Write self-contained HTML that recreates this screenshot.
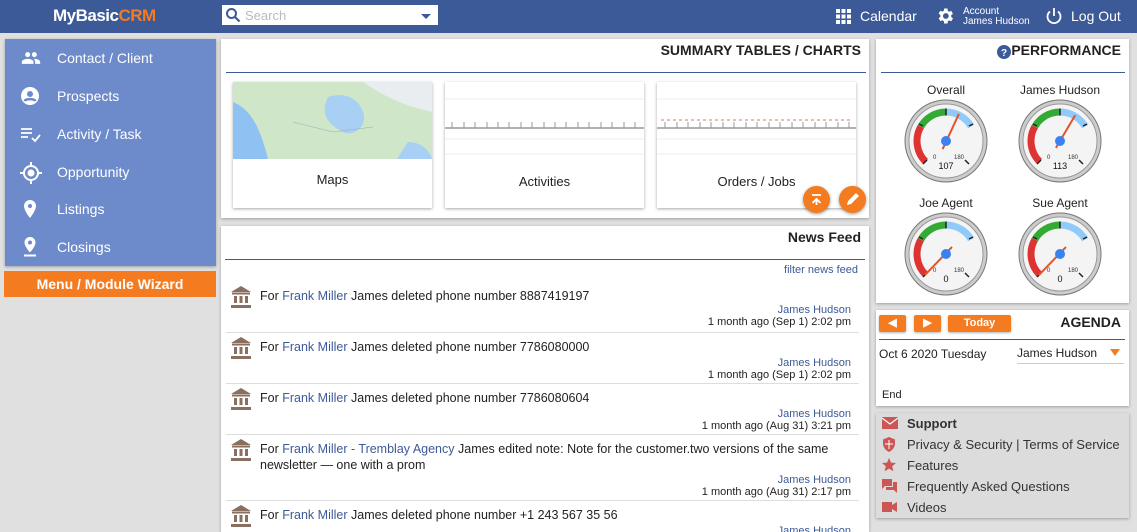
<!DOCTYPE html>
<html><head><meta charset="utf-8"><style>
*{box-sizing:border-box;margin:0;padding:0}
html,body{width:1137px;height:532px;overflow:hidden}
body{background:#e0e0e0;font-family:"Liberation Sans",Arial,sans-serif;position:relative;color:#222}
.abs{position:absolute}
.hdr{left:0;top:0;width:1137px;height:33px;background:#3d5a98}
.card{background:#fff;box-shadow:0 1px 3px rgba(0,0,0,.3)}
.side{left:5px;top:39px;width:211px;height:227px;background:#6d8bcb;box-shadow:0 1px 3px rgba(0,0,0,.3)}
.side .it{position:absolute;left:0;height:38px;width:211px;color:#fff;font-size:14px;line-height:38px}
.side .it span{position:absolute;left:52px}
.side .it svg{position:absolute;left:15px;top:9px}
.wiz{left:4px;top:271px;width:212px;height:26px;background:#f47b20;color:#fff;font-size:14px;font-weight:bold;text-align:center;line-height:26px}
.ttl{font-weight:bold;font-size:14px;position:absolute;right:8px}
.hr{position:absolute;height:1px;background:#3d5a98}
.tile{position:absolute;top:83px;width:199px;height:126px;background:#fff;box-shadow:0 1px 3px rgba(0,0,0,.35);font-size:13px;text-align:center}
.news{position:absolute;left:5px;width:633px;border-top:1px solid #ddd;font-size:12.5px}
.news .t{position:absolute;left:34px;top:6px;width:590px;line-height:16px}
.news .r{position:absolute;right:8px;text-align:right;font-size:11px;line-height:12px}
a{color:#3d5a98;text-decoration:none}
.blue{color:#3d5a98}
.bank{position:absolute;left:4px;top:3px}
.gl{position:absolute;font-size:12px;text-align:center;width:110px}
.btn{position:absolute;top:315px;height:17px;background:#f47b20;color:#fff;font-size:11px;font-weight:bold;text-align:center;line-height:17px;border-radius:2px;box-shadow:0 1px 2px rgba(0,0,0,.3)}
.sup{left:876px;top:413px;width:253px;height:105px;background:#dcdcdc;box-shadow:0 1px 3px rgba(0,0,0,.3);font-size:13px;color:#333}
.sup div{position:absolute;left:31px}
.sup svg{position:absolute;left:6px}
</style></head><body>
<div class="abs hdr"></div>
<div class="abs" style="left:53px;top:6px;font-size:17px;font-weight:bold;color:#fff;letter-spacing:-0.5px">MyBasic<span style="color:#f47b20">CRM</span></div>
<div class="abs" style="left:222px;top:5px;width:216px;height:20px;background:#fff"></div>
<svg class="abs" style="left:225px;top:7px" width="16" height="16" viewBox="0 0 16 16"><circle cx="6.5" cy="6.5" r="4.5" fill="none" stroke="#3d5a98" stroke-width="2"/><path d="M10 10l4.5 4.5" stroke="#3d5a98" stroke-width="2.2"/></svg>
<div class="abs" style="left:245px;top:8px;font-size:13px;color:#bbb">Search</div>
<div class="abs" style="left:421px;top:14px;width:0;height:0;border-left:5px solid transparent;border-right:5px solid transparent;border-top:5px solid #3d5a98"></div>
<svg class="abs" style="left:836px;top:9px" width="15" height="15"><g fill="#fff"><rect x="0" y="0" width="4" height="4"/><rect x="5.5" y="0" width="4" height="4"/><rect x="11" y="0" width="4" height="4"/><rect x="0" y="5.5" width="4" height="4"/><rect x="5.5" y="5.5" width="4" height="4"/><rect x="11" y="5.5" width="4" height="4"/><rect x="0" y="11" width="4" height="4"/><rect x="5.5" y="11" width="4" height="4"/><rect x="11" y="11" width="4" height="4"/></g></svg>
<div class="abs" style="left:860px;top:8px;color:#fff;font-size:14px">Calendar</div>
<svg class="abs" style="left:935px;top:6px" width="20" height="20" viewBox="0 0 24 24"><path fill="#fff" d="M19.4 13a7.5 7.5 0 000-2l2.1-1.6-2-3.5-2.5 1a7 7 0 00-1.7-1L15 3h-4l-.4 2.7a7 7 0 00-1.7 1l-2.5-1-2 3.5L6.5 11a7.5 7.5 0 000 2l-2.1 1.6 2 3.5 2.5-1a7 7 0 001.7 1L11 21h4l.4-2.7a7 7 0 001.7-1l2.5 1 2-3.5zM13 15.5A3.5 3.5 0 1113 8.5a3.5 3.5 0 010 7z"/></svg>
<div class="abs" style="left:963px;top:7px;color:#fff;font-size:10px;line-height:10px">Account<br>James Hudson</div>
<svg class="abs" style="left:1045px;top:7px" width="18" height="18" viewBox="0 0 18 18"><path d="M5 4.5a6.5 6.5 0 108 0" fill="none" stroke="#fff" stroke-width="1.8"/><path d="M9 1v8" stroke="#fff" stroke-width="1.8"/></svg>
<div class="abs" style="left:1071px;top:8px;color:#fff;font-size:14px">Log Out</div>

<div class="abs side">
<div class="it" style="top:0"><svg width="22" height="20" viewBox="0 0 24 24"><path fill="#fff" d="M16 11a3 3 0 100-6 3 3 0 000 6zm-8 0a3 3 0 100-6 3 3 0 000 6zm0 2c-2.3 0-7 1.2-7 3.5V19h14v-2.5C15 14.2 10.3 13 8 13zm8 0c-.3 0-.6 0-1 .1 1.2.8 2 2 2 3.4V19h6v-2.5c0-2.3-4.7-3.5-7-3.5z"/></svg><span>Contact / Client</span></div>
<div class="it" style="top:38px"><svg width="20" height="20" viewBox="0 0 20 20"><circle cx="10" cy="10" r="9" fill="#fff"/><circle cx="10" cy="8" r="3" fill="#6d8bcb"/><path d="M4.5 15c1.5-2.5 9.5-2.5 11 0" stroke="#6d8bcb" stroke-width="2.5" fill="none"/></svg><span>Prospects</span></div>
<div class="it" style="top:76px"><svg width="22" height="20" viewBox="0 0 22 20"><path d="M1 5h11M1 9h11M1 13h7M12 14l3 3 5-6" stroke="#fff" stroke-width="1.8" fill="none"/></svg><span>Activity / Task</span></div>
<div class="it" style="top:114px"><svg width="22" height="22" viewBox="0 0 22 22"><circle cx="11" cy="11" r="7" fill="none" stroke="#fff" stroke-width="2"/><circle cx="11" cy="11" r="3.5" fill="#fff"/><path d="M11 0v4M11 18v4M0 11h4M18 11h4" stroke="#fff" stroke-width="2"/></svg><span>Opportunity</span></div>
<div class="it" style="top:151px"><svg width="20" height="20" viewBox="0 0 20 20"><path fill="#fff" d="M10 1a6 6 0 00-6 6c0 4.5 6 12 6 12s6-7.5 6-12a6 6 0 00-6-6zm0 8a2 2 0 110-4 2 2 0 010 4z"/></svg><span>Listings</span></div>
<div class="it" style="top:189px"><svg width="20" height="20" viewBox="0 0 20 20"><path fill="#fff" d="M10 0a5.5 5.5 0 00-5.5 5.5c0 4 5.5 10 5.5 10s5.5-6 5.5-10A5.5 5.5 0 0010 0zm0 7.5a2 2 0 110-4 2 2 0 010 4z"/><rect x="4" y="17.5" width="12" height="2" fill="#fff"/></svg><span>Closings</span></div>
</div>
<div class="abs wiz">Menu / Module Wizard</div>

<!-- summary -->
<div class="abs card" style="left:221px;top:39px;width:648px;height:179px">
<div class="ttl" style="top:3px">SUMMARY TABLES / CHARTS</div>
<div class="hr" style="left:5px;top:33px;width:640px"></div>
<div class="tile" style="left:12px;top:43px">
<svg width="199" height="77" style="display:block"><rect width="199" height="77" fill="#cfe6c9"/><path d="M0 20C20 28 28 50 35 77H0z" fill="#8fc1f2"/><path d="M95 15c15-5 30 0 35 15s-10 25-20 20-25-15-15-35z" fill="#a8cff4"/><path d="M130 0h69v30c-20-5-40-10-69-30z" fill="#e8eef0"/><path d="M175 60c10 0 20 5 24 17h-35z" fill="#a8cff4"/><path d="M60 40l40 10 40-5" stroke="#9ab" stroke-width=".5" fill="none"/></svg>
<div style="margin-top:13px">Maps</div></div>
<div class="tile" style="left:224px;top:43px">
<svg width="199" height="77" style="display:block"><path d="M0 17h199M0 57h199M0 72h199" stroke="#eee"/><path d="M0 46h199" stroke="#666"/><g stroke="#999">
<path d="M7 40v6M19 40v6M30 40v6M42 40v6M53 40v6M64 40v6M76 40v6M87 40v6M99 40v6M110 40v6M121 40v6M133 40v6M144 40v6M156 40v6M167 40v6M179 40v6M190 40v6"/></g></svg>
<div style="margin-top:15px">Activities</div></div>
<div class="tile" style="left:436px;top:43px">
<svg width="199" height="77" style="display:block"><path d="M0 17h199M0 57h199M0 72h199" stroke="#eee"/><path d="M0 46h199" stroke="#666"/><g stroke="#e07060" stroke-dasharray="3 3">
<path d="M4 38h191"/></g><g stroke="#999"><path d="M8 40v6M20 40v6M31 40v6M43 40v6M54 40v6M66 40v6M77 40v6M89 40v6M100 40v6M112 40v6M123 40v6M135 40v6M146 40v6M158 40v6M169 40v6M181 40v6M192 40v6"/></g></svg>
<div style="margin-top:15px">Orders / Jobs</div></div>
<div class="abs" style="left:582px;top:147px;width:27px;height:27px;border-radius:50%;background:#f47b20;box-shadow:0 1px 3px rgba(0,0,0,.4)"><svg width="27" height="27"><path d="M9 9h9M9.5 17l4-4 4 4M13.5 13v6" stroke="#fff" stroke-width="1.8" fill="none"/></svg></div>
<div class="abs" style="left:618px;top:147px;width:27px;height:27px;border-radius:50%;background:#f47b20;box-shadow:0 1px 3px rgba(0,0,0,.4)"><svg width="27" height="27"><path d="M8 19l1-4 8-8 3 3-8 8z" fill="#fff"/></svg></div>
</div>

<!-- news -->
<div class="abs card" style="left:221px;top:226px;width:648px;height:306px;overflow:hidden">
<div class="ttl" style="top:3px">News Feed</div>
<div class="hr" style="left:4px;top:33px;width:640px"></div>
<div class="abs blue" style="right:11px;top:38px;font-size:11px">filter news feed</div>
<div class="news" style="top:56px;height:50px;border-top:none"><svg class="bank" width="22" height="24" viewBox="0 0 22 24"><path d="M11 1L1 7h20z M2 7.5h18v2H2z" fill="#8a6e5f"/><rect x="4" y="11" width="3" height="7" fill="#8a6e5f"/><rect x="9.5" y="11" width="3" height="7" fill="#8a6e5f"/><rect x="15" y="11" width="3" height="7" fill="#8a6e5f"/><rect x="1" y="20" width="20" height="3" fill="#8a6e5f"/></svg><div class="t">For <a>Frank Miller</a> James deleted phone number 8887419197</div><div class="r" style="top:22px"><span class="blue">James Hudson</span><br>1 month ago (Sep 1) 2:02 pm</div></div>
<div class="news" style="top:106px;height:51px"><svg class="bank" width="22" height="24" viewBox="0 0 22 24"><path d="M11 1L1 7h20z M2 7.5h18v2H2z" fill="#8a6e5f"/><rect x="4" y="11" width="3" height="7" fill="#8a6e5f"/><rect x="9.5" y="11" width="3" height="7" fill="#8a6e5f"/><rect x="15" y="11" width="3" height="7" fill="#8a6e5f"/><rect x="1" y="20" width="20" height="3" fill="#8a6e5f"/></svg><div class="t">For <a>Frank Miller</a> James deleted phone number 7786080000</div><div class="r" style="top:24px"><span class="blue">James Hudson</span><br>1 month ago (Sep 1) 2:02 pm</div></div>
<div class="news" style="top:157px;height:51px"><svg class="bank" width="22" height="24" viewBox="0 0 22 24"><path d="M11 1L1 7h20z M2 7.5h18v2H2z" fill="#8a6e5f"/><rect x="4" y="11" width="3" height="7" fill="#8a6e5f"/><rect x="9.5" y="11" width="3" height="7" fill="#8a6e5f"/><rect x="15" y="11" width="3" height="7" fill="#8a6e5f"/><rect x="1" y="20" width="20" height="3" fill="#8a6e5f"/></svg><div class="t">For <a>Frank Miller</a> James deleted phone number 7786080604</div><div class="r" style="top:24px"><span class="blue">James Hudson</span><br>1 month ago (Aug 31) 3:21 pm</div></div>
<div class="news" style="top:208px;height:66px"><svg class="bank" width="22" height="24" viewBox="0 0 22 24"><path d="M11 1L1 7h20z M2 7.5h18v2H2z" fill="#8a6e5f"/><rect x="4" y="11" width="3" height="7" fill="#8a6e5f"/><rect x="9.5" y="11" width="3" height="7" fill="#8a6e5f"/><rect x="15" y="11" width="3" height="7" fill="#8a6e5f"/><rect x="1" y="20" width="20" height="3" fill="#8a6e5f"/></svg><div class="t">For <a>Frank Miller - Tremblay Agency</a> James edited note: Note for the customer.two versions of the same newsletter — one with a prom</div><div class="r" style="top:39px"><span class="blue">James Hudson</span><br>1 month ago (Aug 31) 2:17 pm</div></div>
<div class="news" style="top:274px;height:50px"><svg class="bank" width="22" height="24" viewBox="0 0 22 24"><path d="M11 1L1 7h20z M2 7.5h18v2H2z" fill="#8a6e5f"/><rect x="4" y="11" width="3" height="7" fill="#8a6e5f"/><rect x="9.5" y="11" width="3" height="7" fill="#8a6e5f"/><rect x="15" y="11" width="3" height="7" fill="#8a6e5f"/><rect x="1" y="20" width="20" height="3" fill="#8a6e5f"/></svg><div class="t">For <a>Frank Miller</a> James deleted phone number +1 243 567 35 56</div><div class="r" style="top:24px"><span class="blue">James Hudson</span></div></div>
</div>

<!-- performance -->
<div class="abs card" style="left:876px;top:39px;width:253px;height:264px">
<svg class="abs" style="left:121px;top:6px" width="14" height="14"><circle cx="7" cy="7" r="7" fill="#3d5a98"/><text x="7" y="11" font-size="10" font-weight="bold" fill="#fff" text-anchor="middle" font-family="Liberation Sans">?</text></svg>
<div class="ttl" style="top:3px">PERFORMANCE</div>
<div class="hr" style="left:5px;top:33px;width:244px"></div>
<div class="gl" style="left:15px;top:44px">Overall</div>
<div class="gl" style="left:129px;top:44px">James Hudson</div>
<div class="gl" style="left:15px;top:157px">Joe Agent</div>
<div class="gl" style="left:129px;top:157px">Sue Agent</div>
<svg class="abs" style="left:0;top:0" width="253" height="264">
<defs><symbol id="dial" viewBox="0 0 84 84"><circle cx="42" cy="42" r="41" fill="#ccc" stroke="#777" stroke-width="1"/><circle cx="42" cy="42" r="37" fill="#f4f4f4" stroke="#999" stroke-width="1"/>
<path d="M21.5 62.5A29 29 0 0 1 16.9 27.5" stroke="#d33" stroke-width="7" fill="none"/>
<path d="M16.9 27.5A29 29 0 0 1 42 13" stroke="#3a3" stroke-width="7" fill="none"/>
<path d="M42 13A29 29 0 0 1 67.1 27.5" stroke="#90caf9" stroke-width="7" fill="none"/>
<path d="M42 9.5v7M19 65l4-4M65 65l-4-4M69 25l-4 2M15 25l4 2" stroke="#222" stroke-width="1.5"/>
<text x="29" y="60" font-size="6" fill="#333" font-family="Liberation Sans">0</text><text x="50" y="60" font-size="6" fill="#333" font-family="Liberation Sans">180</text></symbol></defs>
<use href="#dial" x="28" y="60" width="84" height="84"/>
<use href="#dial" x="142" y="60" width="84" height="84"/>
<use href="#dial" x="28" y="173" width="84" height="84"/>
<use href="#dial" x="142" y="173" width="84" height="84"/>
<g stroke="#e0552b" stroke-width="2"><path d="M66.6 110.2L82.9 74.9"/><path d="M179.9 108.9L199.2 76.2"/><path d="M48.8 236.2L76 208"/><path d="M162.8 236.2L190 208"/></g>
<g fill="#3b82f0"><circle cx="70" cy="102" r="5"/><circle cx="184" cy="102" r="5"/><circle cx="70" cy="215" r="5"/><circle cx="184" cy="215" r="5"/></g>
<g font-size="9" font-family="Liberation Sans" text-anchor="middle" fill="#111"><text x="70" y="130">107</text><text x="184" y="130">113</text><text x="70" y="243">0</text><text x="184" y="243">0</text></g>
</svg>
</div>

<!-- agenda -->
<div class="abs card" style="left:876px;top:310px;width:253px;height:96px">
<div class="ttl" style="top:4px">AGENDA</div>
<div class="hr" style="left:3px;top:29px;width:246px"></div>
<div class="abs" style="left:3px;top:37px;font-size:12px">Oct 6 2020 Tuesday</div>
<div class="abs" style="left:141px;top:36px;font-size:12px;width:107px;height:18px;border-bottom:1px solid #ccc">James Hudson<span style="position:absolute;right:4px;top:3px;border-left:5px solid transparent;border-right:5px solid transparent;border-top:7px solid #f47b20"></span></div>
<div class="abs" style="left:6px;top:79px;font-size:11px">End</div>
</div>
<div class="btn" style="left:879px;width:27px">◀</div>
<div class="btn" style="left:914px;width:27px">▶</div>
<div class="btn" style="left:948px;width:63px">Today</div>

<!-- support -->
<div class="abs sup">
<svg style="top:4px" width="16" height="12"><rect width="16" height="12" fill="#c55"/><path d="M0 1l8 6 8-6" stroke="#fff" stroke-width="1.2" fill="none"/></svg><div style="top:3px;font-weight:bold">Support</div>
<svg style="top:24px" width="14" height="15" viewBox="0 0 14 15"><path d="M7 0L1 2.5v4c0 4 3 7 6 8.5 3-1.5 6-4.5 6-8.5v-4z" fill="#c55"/><path d="M7 3v9M3 7h8" stroke="#fff" stroke-width="1"/></svg><div style="top:24px">Privacy &amp; Security | Terms of Service</div>
<svg style="top:45px" width="14" height="14" viewBox="0 0 14 14"><path d="M7 0l2 4.6 5 .4-3.8 3.3 1.2 4.9L7 10.6 2.6 13.2l1.2-4.9L0 5l5-.4z" fill="#c55"/></svg><div style="top:45px">Features</div>
<svg style="top:66px" width="15" height="14"><path d="M0 0h10v7H3l-3 3z M11 3h4v11l-3-3H4V8h7z" fill="#c55"/></svg><div style="top:66px">Frequently Asked Questions</div>
<svg style="top:89px" width="15" height="10"><rect width="10" height="10" fill="#c55"/><path d="M10 3l5-3v10l-5-3z" fill="#c55"/></svg><div style="top:87px">Videos</div>
</div>
</body></html>
